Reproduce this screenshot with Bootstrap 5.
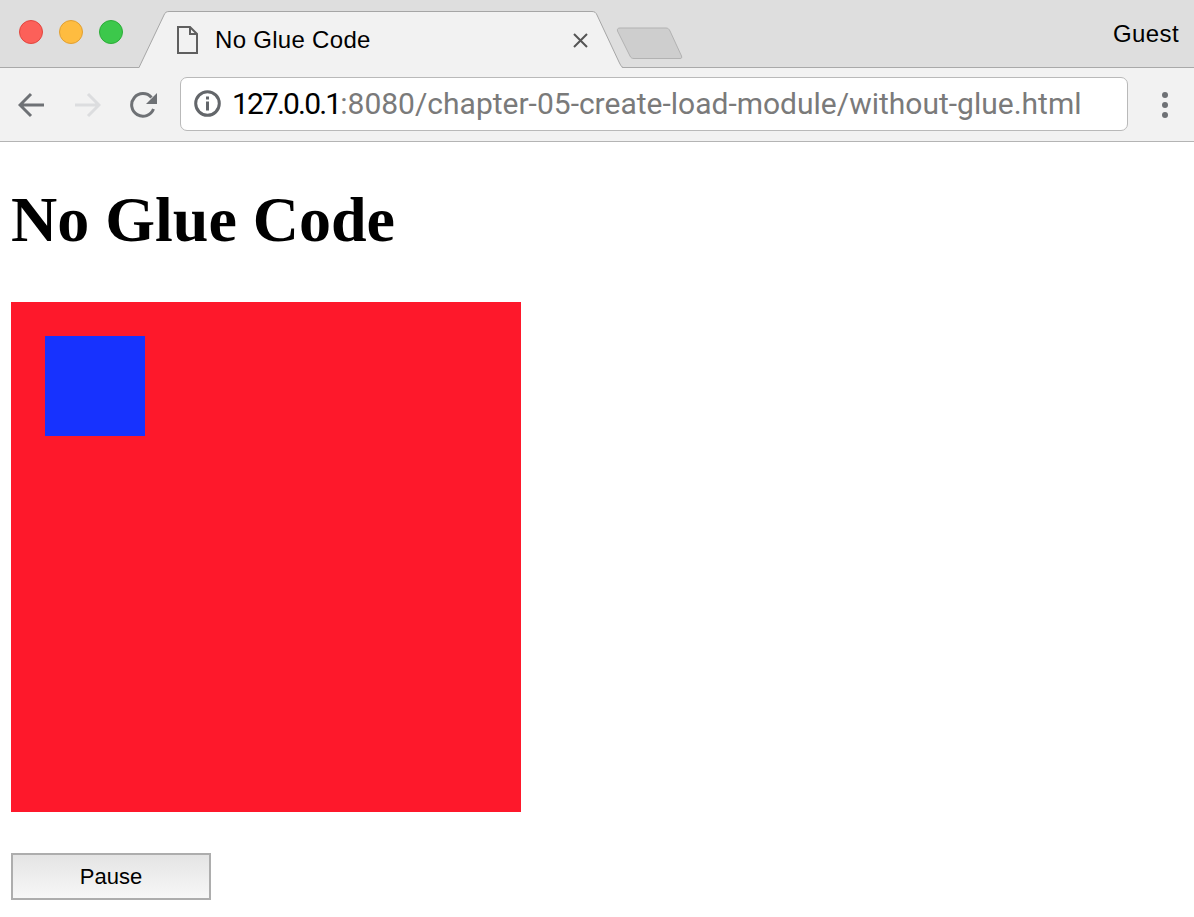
<!DOCTYPE html>
<html lang="en">
<head>
<meta charset="utf-8">
<title>No Glue Code</title>
<link href="https://cdn.jsdelivr.net/npm/bootstrap@5.3.0/dist/css/bootstrap.min.css" rel="stylesheet">
<style>
html,body{background:#fff;margin:0;overflow:hidden}
body{font-family:"Liberation Sans",Arial,sans-serif;color:#000}
.strip{height:68px;background:#dedede}
.strip-left{width:139px;height:68px;border-bottom:1px solid #a9a9a9;padding-left:19px}
.light{width:24px;height:24px;border-radius:50%;border:1px solid}
.l-red{background:#fc6059;border-color:#e2463f}
.l-yellow{background:#febc40;border-color:#e1a032}
.l-green{background:#3cc84b;border-color:#2cad38}
.lights{gap:16px;padding-top:20px}
.tabbox{width:483px;height:68px;padding:26px 34px 0 38px}
.tabshape{position:absolute;left:0;top:0}
.tabtitle{font-size:24px;line-height:28px;margin-left:17px;letter-spacing:.3px}
.strip-right{height:68px;border-bottom:1px solid #a9a9a9;padding-right:15px}
.guest{font-size:24px;line-height:28px;margin-top:20px;letter-spacing:.4px}
.newtab{margin:27px 0 0 -6px}
.tools{height:74px;background:#f2f2f2;border-bottom:1px solid #b4b4b4;padding-left:18px}
.omni{width:948px;height:54px;margin-left:22px;margin-bottom:2px;background:#fff;border:1px solid #b9b9b9;border-radius:7px;padding-left:13px}
.urltext{font-family:Roboto,"Liberation Sans",sans-serif;font-size:30px;line-height:32px;color:#7a7a7a;margin-left:11px;white-space:nowrap}
.urlhost{color:#000;letter-spacing:-1.85px}
.dots{margin-left:33px}
.page{padding:0 11px}
.heading{font-family:"Liberation Serif","Times New Roman",serif;font-weight:700;font-size:64px;line-height:74px;margin:41px 0 0}
.stage{width:510px;height:510px;background:#fe182b;padding:34px;margin-top:45px}
.sprite{width:100px;height:100px;background:#1732fe}
.pausebtn{display:block;width:200px;height:47px;margin-top:41px;padding:0;border:2px solid #adadad;border-radius:0;background:linear-gradient(#e4e4e4,#f7f7f7);font-size:22px;line-height:26px;color:#000}
</style>
</head>
<body>
<header>
  <div class="strip d-flex">
    <div class="strip-left">
      <div class="lights d-flex">
        <span class="light l-red"></span><span class="light l-yellow"></span><span class="light l-green"></span>
      </div>
    </div>
    <div class="tabbox position-relative d-flex align-items-start">
      <svg class="tabshape" width="484" height="68" viewBox="0 0 484 68"><path d="M0 67.500 L25 15 C26 12.500 27.500 11.500 30 11.500 L453 11.500 C455.500 11.500 457 12.500 458 15 L480 62 C481.500 65 482.500 67 484 67.500" fill="#f2f2f2" stroke="#a6a6a6" stroke-width="1"/><path d="M1 68H482" stroke="#f2f2f2" stroke-width="2"/></svg>
      <svg class="position-relative" width="21" height="28" viewBox="0 0 21 28"><path d="M1 1H13L20 8V27H1Z M13 1V8H20" fill="none" stroke="#5f5f5f" stroke-width="2"/></svg>
      <span class="tabtitle position-relative">No Glue Code</span>
      <svg class="position-relative ms-auto" style="margin-top:7px" width="15" height="15" viewBox="0 0 15 15"><path d="M1 1L14 14M14 1L1 14" stroke="#555" stroke-width="2"/></svg>
    </div>
    <div class="strip-right flex-grow-1 d-flex align-items-start">
      <svg class="newtab" width="67" height="33" viewBox="0 0 67 33"><path d="M1.500 4 C1 2 2 1 4 1 L50 1 C52 1 53 2 54 4 L65.500 29 C66 31 65.500 31.500 64 31.500 L18 31.500 C16 31.500 15 31 14 29 Z" fill="#cecece" stroke="#b2b2b2"/></svg>
      <span class="guest ms-auto">Guest</span>
    </div>
  </div>
  <div class="tools d-flex align-items-center">
    <svg width="27" height="26" viewBox="0 0 27 26"><path d="M26 13H3M13 2L2 13L13 24" fill="none" stroke="#6e7175" stroke-width="3"/></svg>
    <svg style="margin-left:29px" width="27" height="26" viewBox="0 0 27 26"><path d="M1 13H24M14 2L25 13L14 24" fill="none" stroke="#dcdddf" stroke-width="3"/></svg>
    <svg style="margin-left:29px" width="28" height="26" viewBox="0 0 28 26"><path d="M23.500 17A11.300 11.300 0 1 1 21.500 5.500" fill="none" stroke="#6e7175" stroke-width="3"/><path d="M27 1V12H16Z" fill="#6e7175"/></svg>
    <div class="omni d-flex align-items-center">
      <svg width="27" height="27" viewBox="0 0 27 27"><circle cx="13.500" cy="13.500" r="11.800" fill="none" stroke="#63666a" stroke-width="3"/><rect x="12" y="6.500" width="3" height="3" fill="#63666a"/><rect x="12" y="11.500" width="3" height="9" fill="#63666a"/></svg>
      <span class="urltext"><span class="urlhost">127.0.0.1</span>:8080/chapter-05-create-load-module/without-glue.html</span>
    </div>
    <svg class="dots" width="8" height="28" viewBox="0 0 8 28"><circle cx="4" cy="4" r="3" fill="#6e7175"/><circle cx="4" cy="14" r="3" fill="#6e7175"/><circle cx="4" cy="24" r="3" fill="#6e7175"/></svg>
  </div>
</header>
<main class="page">
  <h1 class="heading">No Glue Code</h1>
  <div class="stage"><div class="sprite"></div></div>
  <button type="button" class="pausebtn">Pause</button>
</main>
</body>
</html>
